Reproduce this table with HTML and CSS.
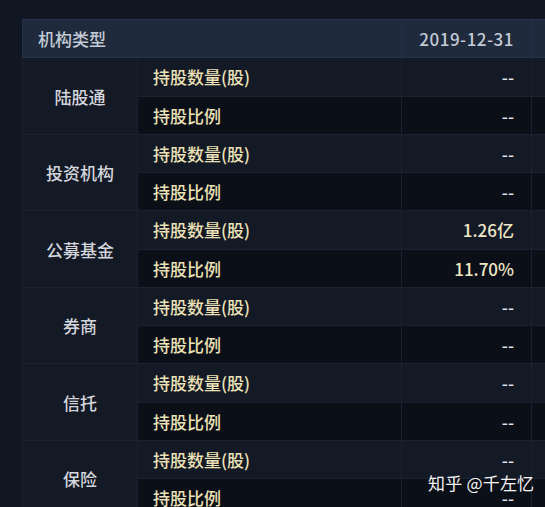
FILE: index.html
```html
<!DOCTYPE html>
<html lang="zh-CN">
<head>
<meta charset="utf-8">
<link rel="stylesheet" href="styles.css">
</head>
<body>
<div class="page">
  <table class="grid">
    <colgroup>
      <col class="c-cat">
      <col class="c-lbl">
      <col class="c-val">
      <col class="c-ext">
    </colgroup>
    <thead>
      <tr>
        <th class="h-type" colspan="2">机构类型</th>
        <th class="h-date">2019-12-31</th>
        <th class="h-extra"></th>
      </tr>
    </thead>
    <tbody>
      <tr class="odd"><td class="cat" rowspan="2">陆股通</td><td class="lbl">持股数量(股)</td><td class="val">--</td><td class="ext"></td></tr>
      <tr class="even"><td class="lbl">持股比例</td><td class="val">--</td><td class="ext"></td></tr>
      <tr class="odd"><td class="cat" rowspan="2">投资机构</td><td class="lbl">持股数量(股)</td><td class="val">--</td><td class="ext"></td></tr>
      <tr class="even"><td class="lbl">持股比例</td><td class="val">--</td><td class="ext"></td></tr>
      <tr class="odd"><td class="cat" rowspan="2">公募基金</td><td class="lbl">持股数量(股)</td><td class="val num">1.26亿</td><td class="ext"></td></tr>
      <tr class="even"><td class="lbl">持股比例</td><td class="val num">11.70%</td><td class="ext"></td></tr>
      <tr class="odd"><td class="cat" rowspan="2">券商</td><td class="lbl">持股数量(股)</td><td class="val">--</td><td class="ext"></td></tr>
      <tr class="even"><td class="lbl">持股比例</td><td class="val">--</td><td class="ext"></td></tr>
      <tr class="odd"><td class="cat" rowspan="2">信托</td><td class="lbl">持股数量(股)</td><td class="val">--</td><td class="ext"></td></tr>
      <tr class="even"><td class="lbl">持股比例</td><td class="val">--</td><td class="ext"></td></tr>
      <tr class="odd"><td class="cat" rowspan="2">保险</td><td class="lbl">持股数量(股)</td><td class="val">--</td><td class="ext"></td></tr>
      <tr class="even"><td class="lbl">持股比例</td><td class="val">--</td><td class="ext"></td></tr>
    </tbody>
  </table>
  <div class="watermark">知乎 @千左忆</div>
</div>
</body>
</html>
```

FILE: styles.css
```css
html, body {
  margin: 0;
  padding: 0;
  background: #111722;
  overflow: hidden;
}
.page {
  position: relative;
  width: 545px;
  height: 507px;
  overflow: hidden;
  background: #111722;
  font-family: "Noto Sans CJK SC", "Noto Sans", sans-serif;
}
.grid {
  margin: 19px 0 0 22px;
  border-collapse: collapse;
  table-layout: fixed;
  width: 560px;
  border-left: 1px solid #1b2230;
}
.c-cat { width: 115px; }
.c-lbl { width: 264px; }
.c-val { width: 130px; }
.c-ext { width: 51px; }
.grid th, .grid td {
  padding: 0;
  height: 37.25px;
  border: 1px solid #1a2130;
  font-size: 17px;
  font-weight: 500;
  white-space: nowrap;
  overflow: hidden;
}
.grid thead th {
  background: #1f2a3c;
  color: #c3cad5;
  border-color: #25314a;
}
.h-type {
  text-align: left;
  padding-left: 15px !important;
}
.h-date {
  text-align: right;
  padding-right: 17px !important;
  letter-spacing: 0.5px;
}
.cat {
  text-align: center;
  color: #d3d6dc;
  background: #131925;
}
.lbl {
  text-align: left;
  padding-left: 15px !important;
  color: #ece1b6;
}
.val {
  text-align: right;
  padding-right: 17px !important;
  color: #e4e6ea;
}
.val.num {
  color: #efe8c6;
}
.odd td {
  background: #131925;
}
.even td {
  background: #0b0f18;
}
.even td.cat, .odd td.cat {
  background: #131925;
}
.watermark {
  position: absolute;
  left: 428px;
  top: 470px;
  color: #f4f4f4;
  font-size: 17px;
  font-weight: normal;
  letter-spacing: 0.2px;
  font-family: "Noto Sans CJK SC", sans-serif;
}
```
